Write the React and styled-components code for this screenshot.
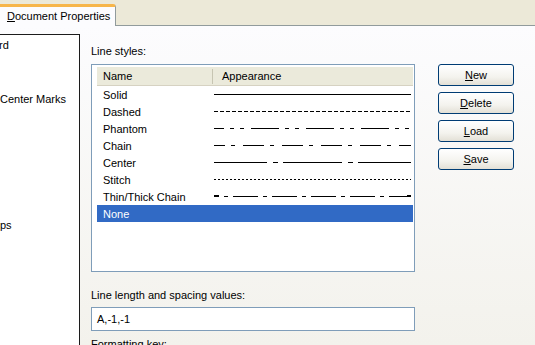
import React from "react";
import styled, { createGlobalStyle } from "styled-components";

const Global = createGlobalStyle`
  html, body { margin: 0; padding: 0; }
  body { font-family: "Liberation Sans", Arial, sans-serif; font-size: 11px; color: #000; }
`;

const Window = styled.div`
  width: 535px;
  height: 345px;
  overflow: hidden;
  display: flex;
  flex-direction: column;
  background: #ece9d8;
`;

const TabStrip = styled.div`
  height: 26px;
  flex-shrink: 0;
  display: flex;
  align-items: flex-end;
  border-bottom: 1px solid #919b9c;
  box-sizing: border-box;
  background: #ece9d8;
`;

const Tab = styled.div`
  height: 22px;
  width: 116px;
  box-sizing: border-box;
  margin-bottom: -1px;
  background: #fcfcfe;
  border-top: 3px solid #f7b64a;
  border-right: 1px solid #919b9c;
  border-top-right-radius: 3px;
  padding-left: 7px;
  display: flex;
  align-items: center;
  padding-bottom: 1px;
`;

const Panel = styled.div`
  flex: 1;
  display: flex;
  align-items: flex-start;
  background: linear-gradient(#fcfcfe, #f3f2ec);
  min-height: 0;
`;

const TreePane = styled.div`
  width: 80px;
  height: 320px;
  flex-shrink: 0;
  box-sizing: border-box;
  margin-top: 8px;
  background: #fff;
  border-top: 1px solid #1c1c1c;
  border-right: 1px solid #1c1c1c;
  display: flex;
  flex-direction: column;
  overflow: hidden;
  padding-top: 1px;
`;

const TreeItem = styled.div`
  height: 18px;
  line-height: 18px;
  white-space: nowrap;
  margin-left: ${(p) => p.$shift || 0}px;
  margin-top: ${(p) => p.$gap || 0}px;
`;

const Content = styled.div`
  margin-left: 11px;
  width: 324px;
  flex-shrink: 0;
  display: flex;
  flex-direction: column;
  padding-top: 18px;
  & > * { flex-shrink: 0; }
`;

const Label = styled.div`
  height: 14px;
  line-height: 14px;
  margin-bottom: ${(p) => p.$mb || 0}px;
  margin-top: ${(p) => p.$mt || 0}px;
`;

const ListBox = styled.div`
  height: 208px;
  box-sizing: border-box;
  border: 1px solid #7f9db9;
  background: #fff;
  padding: 2px 1px 0 5px;
  display: flex;
  flex-direction: column;
  & > * { flex-shrink: 0; }
`;

const Header = styled.div`
  height: 19px;
  display: flex;
  background: #ebeadb;
  border-bottom: 1px solid #d6d2c2;
  box-sizing: border-box;
`;

const HeaderCell = styled.div`
  width: ${(p) => p.$w}px;
  box-sizing: border-box;
  padding-left: ${(p) => p.$pl}px;
  display: flex;
  align-items: center;
  border-right: ${(p) => (p.$divider ? "1px solid #c7c5b2" : "none")};
  height: 15px;
  margin-top: 2px;
  line-height: 15px;
`;

const Row = styled.div`
  height: 17px;
  display: flex;
  align-items: center;
  background: ${(p) => (p.$selected ? "#316ac5" : "transparent")};
  color: ${(p) => (p.$selected ? "#fff" : "#000")};
`;

const NameCell = styled.div`
  width: 117px;
  padding-left: 6px;
  box-sizing: border-box;
  white-space: nowrap;
`;

const LineSvg = styled.svg`
  display: block;
  width: 197px;
  height: 17px;
`;

const Buttons = styled.div`
  margin-left: 23px;
  padding-top: 38px;
  display: flex;
  flex-direction: column;
  gap: 6px;
`;

const Button = styled.button`
  width: 76px;
  height: 22px;
  box-sizing: border-box;
  border: 1px solid #003c74;
  border-radius: 3px;
  background: linear-gradient(#ffffff 0%, #f4f3ee 60%, #e3e0d6 100%);
  font-family: "Liberation Sans", Arial, sans-serif;
  font-size: 11px;
  color: #000;
  padding: 0;
  u { text-decoration: underline; }
`;

const TextBox = styled.div`
  height: 24px;
  box-sizing: border-box;
  border: 1px solid #7f9db9;
  background: #fff;
  padding-left: 5px;
  display: flex;
  align-items: center;
`;

const styles = [
  { name: "Solid", dash: null },
  { name: "Dashed", dash: "4 2" },
  { name: "Phantom", dash: "28 6 4 6 4 7", offset: 18 },
  { name: "Chain", dash: "21 6 4 8", offset: 10 },
  { name: "Center", dash: "59 6 5 5", offset: 6 },
  { name: "Stitch", dash: "2 2" },
  { name: "Thin/Thick Chain", dash: "25 5 4 5", offset: 20, thick: true },
];

function LinePattern({ dash, offset, thick, color }) {
  return (
    <LineSvg viewBox="0 0 197 17">
      <line
        x1="0"
        x2="197"
        y1="8.5"
        y2="8.5"
        stroke={color}
        strokeWidth="1"
        strokeDasharray={dash || undefined}
        strokeDashoffset={offset || 0}
        shapeRendering="crispEdges"
      />
      {thick && (
        <>
          <rect x="0" y="7" width="5" height="2" fill={color} />
          <rect x="193" y="7" width="4" height="2" fill={color} />
        </>
      )}
    </LineSvg>
  );
}

export default function App() {
  return (
    <Window>
      <Global />
      <TabStrip>
        <Tab>
          <span>
            <u>D</u>ocument Properties
          </span>
        </Tab>
      </TabStrip>
      <Panel>
        <TreePane>
          <TreeItem $shift={-1}>rd</TreeItem>
          <TreeItem $gap={36}>Center Marks</TreeItem>
          <TreeItem $gap={108}>ps</TreeItem>
        </TreePane>
        <Content>
          <Label $mb={6}>Line styles:</Label>
          <ListBox>
            <Header>
              <HeaderCell $w={116} $pl={6} $divider>
                Name
              </HeaderCell>
              <HeaderCell $w={200} $pl={9}>
                Appearance
              </HeaderCell>
            </Header>
            {styles.map((s) => (
              <Row key={s.name}>
                <NameCell>{s.name}</NameCell>
                <LinePattern dash={s.dash} offset={s.offset} thick={s.thick} color="#000" />
              </Row>
            ))}
            <Row $selected>
              <NameCell>None</NameCell>
            </Row>
          </ListBox>
          <Label $mt={16} $mb={5}>
            Line length and spacing values:
          </Label>
          <TextBox>A,-1,-1</TextBox>
          <Label $mt={6}>Formatting key:</Label>
        </Content>
        <Buttons>
          <Button>
            <u>N</u>ew
          </Button>
          <Button>
            <u>D</u>elete
          </Button>
          <Button>
            <u>L</u>oad
          </Button>
          <Button>
            <u>S</u>ave
          </Button>
        </Buttons>
      </Panel>
    </Window>
  );
}
